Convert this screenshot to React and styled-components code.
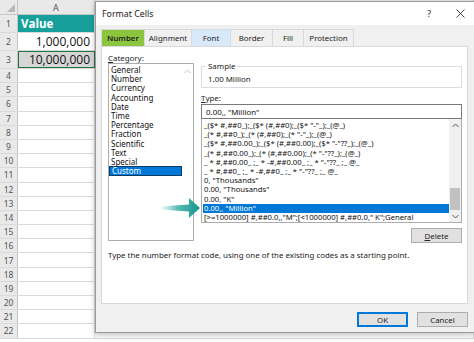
import React from 'react';
import styled, { createGlobalStyle } from 'styled-components';

const GlobalStyle = createGlobalStyle`
  html, body {
    margin: 0;
    padding: 0;
    width: 474px;
    height: 342px;
    overflow: hidden;
    background: #ffffff;
  }
  * { box-sizing: border-box; }
`;

const UI = `"Noto Sans", "Open Sans", sans-serif`;

const categories = [
  'General', 'Number', 'Currency', 'Accounting', 'Date', 'Time',
  'Percentage', 'Fraction', 'Scientific', 'Text', 'Special', 'Custom',
];

const formats = [
  '_($* #,##0_);_($* (#,##0);_($* "-"_);_(@_)',
  '_(* #,##0_);_(* (#,##0);_(* "-"_);_(@_)',
  '_($* #,##0.00_);_($* (#,##0.00);_($* "-"??_);_(@_)',
  '_(* #,##0.00_);_(* (#,##0.00);_(* "-"??_);_(@_)',
  '_ * #,##0.00_ ;_ * -#,##0.00_ ;_ * "-"??_ ;_ @_',
  '_ * #,##0_ ;_ * -#,##0_ ;_ * "-"??_ ;_ @_',
  '0, "Thousands"',
  '0.00, "Thousands"',
  '0.00, "K"',
  '0.00,, "Million"',
  '[>=1000000] #,##0.0,,"M";[<1000000] #,##0.0," K";General',
];

const tabs = [
  { label: 'Number', width: 44 },
  { label: 'Alignment', width: 48 },
  { label: 'Font', width: 40 },
  { label: 'Border', width: 43 },
  { label: 'Fill', width: 32 },
  { label: 'Protection', width: 51 },
];

// first three rows are taller, the rest keep Excel's default height
const rowHeights = Array.from({ length: 22 }, (_, i) => (i < 3 ? 18 : 14.2));

const App = () => (
  <Page>
    <GlobalStyle />
    <Sheet>
      <HeaderRow>
        <Corner>
          <svg width="8" height="8" viewBox="0 0 8 8">
            <polygon points="8,0 8,8 0,8" fill="#b8b8b8" />
          </svg>
        </Corner>
        <ColHeader>A</ColHeader>
        <ColHeader $rest />
      </HeaderRow>
      {rowHeights.map((h, i) => (
        <Row key={i} style={{ height: h }}>
          <RowHeader>{i + 1}</RowHeader>
          {i === 0 && <Cell $head>Value</Cell>}
          {i === 1 && <Cell $num>1,000,000</Cell>}
          {i === 2 && <Cell $num $selected>10,000,000</Cell>}
          {i > 2 && <Cell />}
          <Cell $rest />
        </Row>
      ))}
    </Sheet>

    <Dialog>
      <TitleBar>
        <Title>Format Cells</Title>
        <TitleButtons>
          <TitleBtn>?</TitleBtn>
          <TitleBtn>
            <svg width="9" height="9" viewBox="0 0 9 9">
              <path d="M0.5 0.5 L8.5 8.5 M8.5 0.5 L0.5 8.5" stroke="#333" strokeWidth="0.9" />
            </svg>
          </TitleBtn>
        </TitleButtons>
      </TitleBar>
      <Body>
        <Tabs>
          {tabs.map((t) => (
            <Tab
              key={t.label}
              $width={t.width}
              $active={t.label === 'Number'}
              $hover={t.label === 'Font'}
            >
              {t.label}
            </Tab>
          ))}
        </Tabs>
        <Panel>
          <Columns>
            <LeftCol>
              <Label><u>C</u>ategory:</Label>
              <CategoryBox>
                <CategoryItems>
                  {categories.map((c) => (
                    <CategoryItem key={c} $selected={c === 'Custom'}>{c}</CategoryItem>
                  ))}
                </CategoryItems>
                <MiniScroll>
                  <svg width="7" height="5" viewBox="0 0 7 5">
                    <path d="M0.5 4 L3.5 1 L6.5 4" fill="none" stroke="#c4c4c4" strokeWidth="1" />
                  </svg>
                </MiniScroll>
              </CategoryBox>
            </LeftCol>
            <RightCol>
              <SampleBox>
                <Legend>Sample</Legend>
                <SampleValue>1.00 Million</SampleValue>
              </SampleBox>
              <Label $type><u>T</u>ype:</Label>
              <TypeInput>0.00,, &quot;Million&quot;</TypeInput>
              <FormatBox>
                <FormatItems>
                  {formats.map((f, i) => (
                    <FormatItem key={i} $selected={i === 9}>{f}</FormatItem>
                  ))}
                </FormatItems>
                <ScrollBar>
                  <ScrollArrow>
                    <svg width="7" height="5" viewBox="0 0 7 5">
                      <path d="M0.5 4 L3.5 1 L6.5 4" fill="none" stroke="#555" strokeWidth="1" />
                    </svg>
                  </ScrollArrow>
                  <ScrollTrack>
                    <Thumb />
                  </ScrollTrack>
                  <ScrollArrow>
                    <svg width="7" height="5" viewBox="0 0 7 5">
                      <path d="M0.5 1 L3.5 4 L6.5 1" fill="none" stroke="#555" strokeWidth="1" />
                    </svg>
                  </ScrollArrow>
                </ScrollBar>
              </FormatBox>
              <DeleteRow>
                <Button><u>D</u>elete</Button>
              </DeleteRow>
            </RightCol>
          </Columns>
          <Hint>Type the number format code, using one of the existing codes as a starting point.</Hint>
        </Panel>
        <Footer>
          <Button $default>OK</Button>
          <Button>Cancel</Button>
        </Footer>
      </Body>
    </Dialog>

    <Arrow>
      <svg width="42" height="22" viewBox="0 0 42 22">
        <defs>
          <linearGradient id="arrowGrad" x1="0" y1="0" x2="1" y2="0">
            <stop offset="0" stopColor="#3bbcb0" stopOpacity="0" />
            <stop offset="0.45" stopColor="#2aa79c" stopOpacity="0.8" />
            <stop offset="1" stopColor="#16978b" />
          </linearGradient>
        </defs>
        <polygon points="0,9.5 29,7.5 29,1 40,11 29,21 29,14.5 0,12.5" fill="url(#arrowGrad)" />
      </svg>
    </Arrow>
  </Page>
);

export default App;

const Page = styled.div`
  position: relative;
  width: 474px;
  height: 342px;
  overflow: hidden;
  font-family: ${UI};
`;

const Sheet = styled.div`
  display: flex;
  flex-direction: column;
  width: 100%;
`;

const HeaderRow = styled.div`
  display: flex;
  height: 15px;
  flex: none;
  background: #e9e9e9;
  border-bottom: 1px solid #c6c6c6;
`;

const Corner = styled.div`
  width: 18px;
  display: flex;
  align-items: flex-end;
  justify-content: flex-end;
  padding: 0 2px 2px 0;
  border-right: 1px solid #c6c6c6;
`;

const ColHeader = styled.div`
  width: ${({ $rest }) => ($rest ? 'auto' : '77px')};
  flex: ${({ $rest }) => ($rest ? '1' : 'none')};
  display: flex;
  align-items: center;
  justify-content: center;
  font-size: 9px;
  color: #555;
  border-right: 1px solid #c6c6c6;
`;

const Row = styled.div`
  display: flex;
  flex: none;
  border-bottom: 1px solid #dadada;
`;

const RowHeader = styled.div`
  width: 18px;
  flex: none;
  background: #e9e9e9;
  border-right: 1px solid #c6c6c6;
  display: flex;
  align-items: center;
  justify-content: center;
  font-size: 8.5px;
  color: #555;
`;

const Cell = styled.div`
  width: ${({ $rest }) => ($rest ? 'auto' : '77px')};
  flex: ${({ $rest }) => ($rest ? '1' : 'none')};
  display: flex;
  align-items: center;
  justify-content: ${({ $num }) => ($num ? 'flex-end' : 'flex-start')};
  padding: 0 4px 0 3px;
  font-family: "Open Sans", sans-serif;
  font-size: ${({ $head }) => ($head ? '11.5px' : '12px')};
  font-weight: ${({ $head }) => ($head ? 700 : 400)};
  color: ${({ $head }) => ($head ? '#ffffff' : '#111')};
  background: ${({ $head, $selected }) => ($head ? '#17a09b' : $selected ? '#d6d6d6' : 'transparent')};
  border-right: 1px solid #dadada;
  outline: ${({ $selected }) => ($selected ? '1.5px solid #217346' : 'none')};
  outline-offset: -1px;
`;

const Dialog = styled.div`
  position: absolute;
  left: 95px;
  top: 1px;
  width: 380px;
  height: 332px;
  background: #f0f0f0;
  border: 1px solid #9a9a9a;
  box-shadow: 0 2px 6px rgba(0, 0, 0, 0.25);
  display: flex;
  flex-direction: column;
`;

const TitleBar = styled.div`
  height: 23px;
  background: #ffffff;
  display: flex;
  align-items: center;
  justify-content: space-between;
  padding: 0 0 0 6px;
`;

const Title = styled.div`
  font-size: 8.8px;
  color: #1a1a1a;
`;

const TitleButtons = styled.div`
  display: flex;
  align-items: center;
  padding-right: 8px;
  gap: 19px;
`;

const TitleBtn = styled.div`
  font-size: 9.5px;
  color: #333;
  width: 12px;
  display: flex;
  justify-content: center;
`;

const Body = styled.div`
  flex: 1;
  display: flex;
  flex-direction: column;
  padding: 4px 6px 0 5px;
`;

const Tabs = styled.div`
  display: flex;
  height: 17px;
`;

const Tab = styled.div`
  width: ${({ $width }) => $width}px;
  display: flex;
  align-items: center;
  justify-content: center;
  font-size: 7.9px;
  color: #222;
  font-weight: ${({ $active }) => ($active ? 600 : 400)};
  background: ${({ $active, $hover }) => ($active ? '#8cc63f' : $hover ? '#d8eaf9' : '#f0f0f0')};
  border: 1px solid #d9d9d9;
  border-bottom: none;
  margin-right: -1px;
`;

const Panel = styled.div`
  height: 258px;
  background: #ffffff;
  border: 1px solid #d9d9d9;
  display: flex;
  flex-direction: column;
  padding: 5px 5px 0 6px;
`;

const Columns = styled.div`
  display: flex;
  gap: 7px;
`;

const LeftCol = styled.div`
  width: 86px;
  display: flex;
  flex-direction: column;
`;

const Label = styled.div`
  font-size: 7.9px;
  color: #222;
  height: ${({ $type }) => ($type ? '16px' : '11px')};
  display: flex;
  align-items: ${({ $type }) => ($type ? 'flex-end' : 'center')};
  padding-bottom: ${({ $type }) => ($type ? '1px' : '0')};
`;

const CategoryBox = styled.div`
  height: 178px;
  border: 1px solid #adadad;
  display: flex;
`;

const CategoryItems = styled.div`
  flex: 1;
  padding-top: 1px;
`;

const CategoryItem = styled.div`
  font-size: 8px;
  padding-left: 2px;
  color: ${({ $selected }) => ($selected ? '#ffffff' : '#111')};
  background: ${({ $selected }) => ($selected ? '#0078d7' : 'transparent')};
  border: ${({ $selected }) => ($selected ? '1px solid #0b3d63' : 'none')};
  height: ${({ $selected }) => ($selected ? '10px' : '9.2px')};
  line-height: ${({ $selected }) => ($selected ? '8px' : '9.2px')};
`;

const MiniScroll = styled.div`
  width: 11px;
  display: flex;
  justify-content: center;
  padding-top: 5px;
`;

const RightCol = styled.div`
  flex: 1;
  display: flex;
  flex-direction: column;
`;

const SampleBox = styled.fieldset`
  margin: 9px 0 0;
  padding: 0 6px 3px;
  height: 27px;
  border: 1px solid #dcdcdc;
  border-radius: 1px;
`;

const Legend = styled.legend`
  font-size: 7.9px;
  color: #222;
  padding: 0 2px;
  margin-left: -2px;
`;

const SampleValue = styled.div`
  font-size: 7.9px;
  color: #222;
  padding-top: 3px;
`;

const TypeInput = styled.div`
  height: 15px;
  border: 1px solid #7a7a7a;
  font-size: 7.9px;
  color: #111;
  display: flex;
  align-items: center;
  padding-left: 4px;
`;

const FormatBox = styled.div`
  height: 104px;
  border: 1px solid #adadad;
  border-top: none;
  display: flex;
`;

const FormatItems = styled.div`
  flex: 1;
  padding: 2px 0 0 1px;
  overflow: hidden;
`;

const FormatItem = styled.div`
  height: 9.2px;
  line-height: 9.2px;
  font-size: 7.7px;
  white-space: nowrap;
  padding-left: 1px;
  color: ${({ $selected }) => ($selected ? '#ffffff' : '#111')};
  background: ${({ $selected }) => ($selected ? '#0078d7' : 'transparent')};
`;

const ScrollBar = styled.div`
  width: 12px;
  background: #f0f0f0;
  display: flex;
  flex-direction: column;
`;

const ScrollArrow = styled.div`
  height: 12px;
  display: flex;
  align-items: center;
  justify-content: center;
`;

const ScrollTrack = styled.div`
  flex: 1;
  display: flex;
  flex-direction: column;
  justify-content: flex-end;
  padding: 0 1px 0;
`;

const Thumb = styled.div`
  height: 22px;
  background: #c1c1c1;
`;

const DeleteRow = styled.div`
  display: flex;
  justify-content: flex-end;
  padding-top: 5px;
`;

const Button = styled.div`
  width: 51px;
  height: 15px;
  display: flex;
  align-items: center;
  justify-content: center;
  font-size: 7.9px;
  color: #222;
  background: #e1e1e1;
  border: 1px solid ${({ $default }) => ($default ? '#0078d7' : '#adadad')};
  box-shadow: ${({ $default }) => ($default ? 'inset 0 0 0 1px #0078d7' : 'none')};
`;

const Hint = styled.div`
  font-size: 7.9px;
  color: #222;
  padding-top: 7px;
`;

const Footer = styled.div`
  display: flex;
  justify-content: flex-end;
  gap: 9px;
  padding-top: 8px;
  padding-right: 0;
`;

const Arrow = styled.div`
  position: absolute;
  left: 160px;
  top: 197px;
  width: 42px;
  height: 22px;
`;
